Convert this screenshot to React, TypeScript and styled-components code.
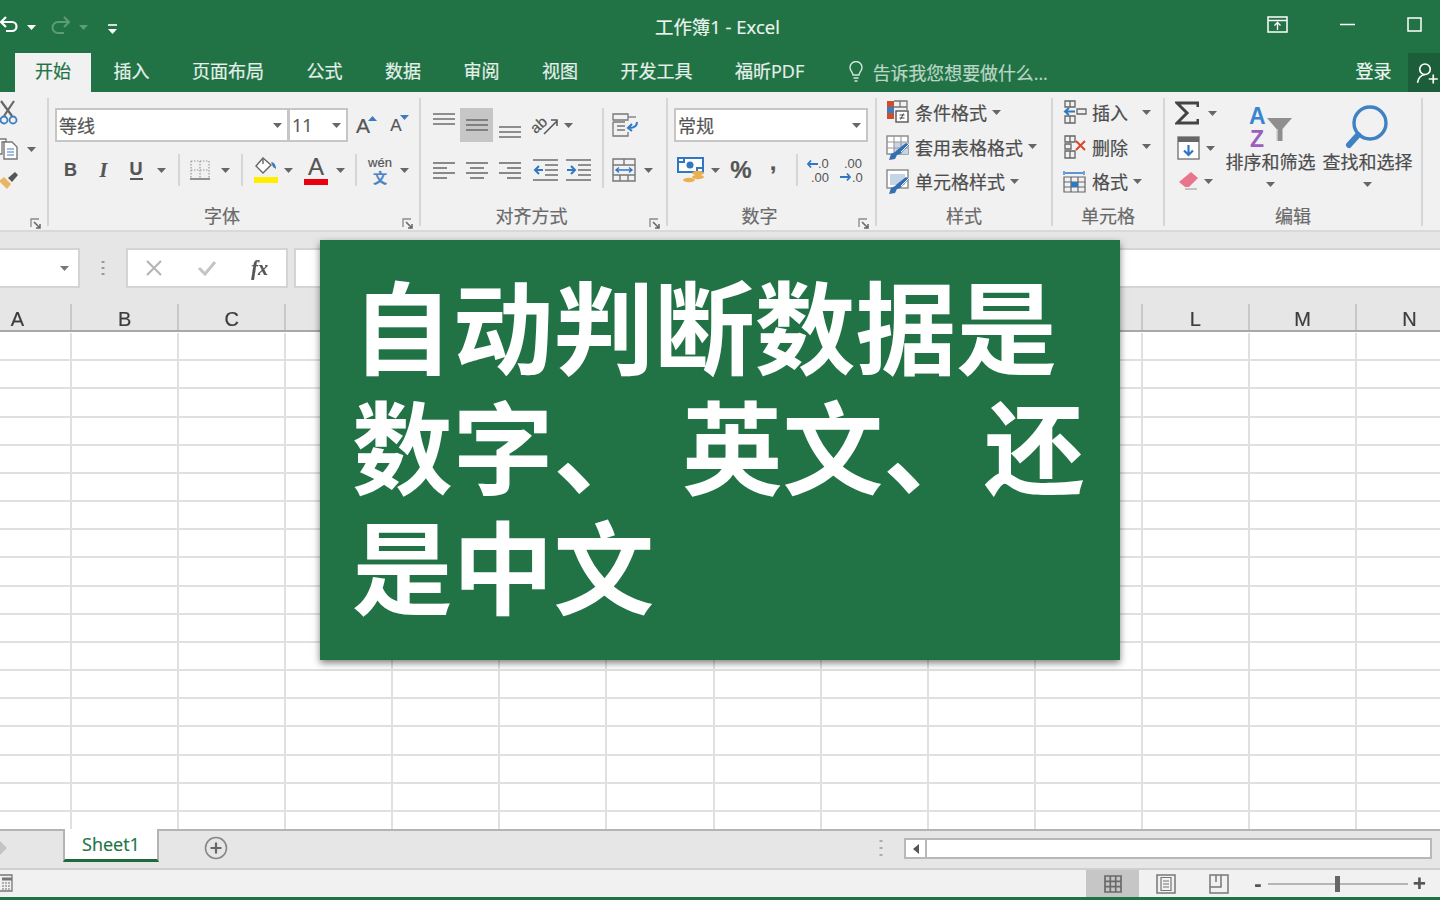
import React from "react";
import styled, { createGlobalStyle } from "styled-components";

const GREEN = "#217346";
const INK = "#555";
const FONT = `"Open Sans", "Noto Sans CJK SC", sans-serif`;

const Global = createGlobalStyle`
  html, body { margin: 0; padding: 0; width: 1440px; height: 900px; overflow: hidden; background: #fff; }
  * { box-sizing: border-box; }
`;

const Shell = styled.div`
  position: relative;
  width: 1440px;
  height: 900px;
  overflow: hidden;
  font-family: ${FONT};
  display: flex;
  flex-direction: column;
`;

const Base = styled.div`
  display: flex;
  flex-direction: column;
  height: 900px;
  filter: blur(0.35px);
  -webkit-text-stroke: 0.2px currentColor;
`;

/* title bar */
const TitleBar = styled.div`
  height: 53px;
  background: ${GREEN};
  display: flex;
  align-items: center;
  color: #eef5f0;
  padding-top: 1px;
`;
const Quick = styled.div`
  width: 642px;
  display: flex;
  align-items: center;
`;
const TitleText = styled.div`
  width: 153px;
  font-size: 18.4px;
  line-height: 24px;
  padding-left: 13px;
  white-space: nowrap;
`;
const WindowBtns = styled.div`
  margin-left: auto;
  display: flex;
  align-items: center;
  padding-right: 18px;
  gap: 52px;
`;

/* tabs */
const TabRow = styled.div`
  height: 39px;
  background: ${GREEN};
  display: flex;
  align-items: stretch;
  padding-left: 15px;
  gap: 2.5px;
`;
const Tab = styled.div<{ $active?: boolean }>`
  padding: 0 20px;
  font-size: 18px;
  line-height: 37px;
  white-space: nowrap;
  color: ${(p) => (p.$active ? GREEN : "#e6f0ea")};
  background: ${(p) => (p.$active ? "#f1f1f1" : "transparent")};
`;
const TellMe = styled.div`
  display: flex;
  align-items: center;
  gap: 9px;
  margin-left: 21px;
  height: 37px;
  font-size: 17.9px;
  color: #bcd6c6;
  white-space: nowrap;
`;
const Login = styled.div`
  margin-left: auto;
  font-size: 18px;
  line-height: 37px;
  color: #eef5f0;
  margin-right: 14px;
`;
const Account = styled.div`
  width: 32px;
  background: #1b5e39;
  display: flex;
  align-items: center;
  padding-left: 8px;
  overflow: hidden;
`;

/* ribbon */
const Ribbon = styled.div`
  height: 140px;
  background: #f1f1f1;
  border-bottom: 2px solid #d9d9d9;
  padding-top: 6px;
  display: flex;
  align-items: flex-start;
`;
const Group = styled.div<{ $w: number }>`
  position: relative;
  width: ${(p) => p.$w}px;
  height: 128px;
  border-right: 2px solid #d6d6d6;
  display: flex;
  flex-direction: column;
`;
const Body = styled.div<{ $pl: number; $pt?: number; $gap?: number }>`
  flex: 1;
  padding-left: ${(p) => p.$pl}px;
  padding-top: ${(p) => p.$pt ?? 10}px;
  display: flex;
  flex-direction: column;
  gap: ${(p) => p.$gap ?? 11}px;
  min-height: 0;
`;
const GroupLabel = styled.div<{ $pr?: number }>`
  height: 20px;
  line-height: 20px;
  font-size: 18px;
  color: #6a6a6a;
  text-align: center;
  padding-right: ${(p) => p.$pr ?? 0}px;
`;
const Launcher = styled.div`
  position: absolute;
  right: 5px;
  bottom: 1px;
  width: 12px;
  height: 12px;
`;
const Row = styled.div<{ $h?: number }>`
  height: ${(p) => p.$h ?? 34}px;
  display: flex;
  align-items: center;
`;
const Slot = styled.div<{ $w: number; $ml?: number; $on?: boolean }>`
  flex: 0 0 ${(p) => p.$w}px;
  width: ${(p) => p.$w}px;
  height: 34px;
  margin-left: ${(p) => p.$ml ?? 0}px;
  display: flex;
  align-items: center;
  justify-content: center;
  background: ${(p) => (p.$on ? "#c6c6c6" : "transparent")};
`;
const Combo = styled.div<{ $w: number; $overlap?: boolean }>`
  width: ${(p) => p.$w}px;
  height: 34px;
  margin-left: ${(p) => (p.$overlap ? -1 : 0)}px;
  border: 2px solid #c6c6c6;
  background: #fff;
  display: flex;
  align-items: center;
  justify-content: space-between;
  padding: 0 5px 0 2px;
  font-size: 18px;
  color: #555;
`;
const VSep = styled.div<{ $ml: number; $h?: number }>`
  flex: 0 0 2px;
  width: 2px;
  height: ${(p) => p.$h ?? 32}px;
  margin-left: ${(p) => p.$ml}px;
  background: #d6d6d6;
`;
const Glyph = styled.span<{ $bold?: boolean; $italic?: boolean; $under?: boolean; $size?: number; $serif?: boolean; $lift?: number }>`
  font-family: ${(p) => (p.$serif ? `"Liberation Serif", serif` : `"Liberation Sans", sans-serif`)};
  font-weight: ${(p) => (p.$bold ? 700 : 400)};
  font-style: ${(p) => (p.$italic ? "italic" : "normal")};
  font-size: ${(p) => p.$size ?? 18}px;
  line-height: 1;
  color: ${INK};
  margin-bottom: ${(p) => p.$lift ?? 0}px;
  border-bottom: ${(p) => (p.$under ? `2px solid ${INK}` : "none")};
`;
const Grow = styled.div<{ $top: number }>`
  display: flex;
  align-items: flex-start;
  gap: 0;
  svg { margin-top: ${(p) => p.$top}px; margin-left: -2px; }
`;
const Stack = styled.div<{ $lift?: number }>`
  display: flex;
  flex-direction: column;
  align-items: center;
  margin-bottom: ${(p) => p.$lift ?? 0}px;
`;
const ColorBar = styled.div<{ $c: string }>`
  width: 24px;
  height: 6px;
  background: ${(p) => p.$c};
`;
const Wen = styled.div`
  font-family: "Liberation Sans", sans-serif;
  font-size: 13px;
  line-height: 15px;
  color: #555;
`;
const WenZi = styled.div`
  font-size: 14px;
  line-height: 16px;
  font-weight: 700;
  color: #4a86c5;
`;
const Rotated = styled.span`
  display: inline-block;
  font-family: "Liberation Sans", sans-serif;
  font-size: 15px;
  line-height: 15px;
  color: #555;
  transform: rotate(-42deg) translate(-1px, -2px);
  margin-right: -15px;
`;
const Split = styled.div`
  display: flex;
`;
const Col = styled.div<{ $w?: number; $gap?: number }>`
  width: ${(p) => (p.$w ? `${p.$w}px` : "auto")};
  display: flex;
  flex-direction: column;
  gap: ${(p) => p.$gap ?? 11}px;
`;
const ListRow = styled.div`
  height: 24px;
  display: flex;
  align-items: center;
  font-size: 18px;
  color: #4d4d4d;
  white-space: nowrap;
`;
const ListIcon = styled.div<{ $mr: number }>`
  width: 24px;
  height: 24px;
  margin-right: ${(p) => p.$mr}px;
`;
const CaretGap = styled.span<{ $ml: number }>`
  margin-left: ${(p) => p.$ml}px;
  display: flex;
`;
const Big = styled.div<{ $ml?: number }>`
  width: 89px;
  margin-left: ${(p) => p.$ml ?? 0}px;
  display: flex;
  flex-direction: column;
  align-items: center;
`;
const BigIcon = styled.div`
  margin-top: 2px;
  height: 46px;
  display: flex;
`;
const BigLabel = styled.div`
  margin-top: 2px;
  font-size: 18px;
  line-height: 22px;
  color: #4d4d4d;
  white-space: nowrap;
`;
const BigCaret = styled.div`
  margin-top: 9px;
  display: flex;
`;
const EditRow = styled.div`
  display: flex;
  padding: 3px 0 0 10px;
`;
const SmallRow = styled.div<{ $h: number; $mb?: number }>`
  height: ${(p) => p.$h}px;
  margin-bottom: ${(p) => p.$mb ?? 0}px;
  display: flex;
  align-items: center;
`;
const SmallCol = styled.div`
  width: 51px;
  display: flex;
  flex-direction: column;
`;

/* formula bar */
const FormulaBar = styled.div`
  height: 72px;
  background: #e6e6e6;
  display: flex;
  align-items: flex-start;
  padding-top: 16px;
`;
const NameBox = styled.div`
  width: 80px;
  height: 40px;
  background: #fff;
  border: 2px solid #d4d4d4;
  border-left: 0;
  display: flex;
  align-items: center;
  justify-content: flex-end;
  padding-right: 7px;
`;
const Grip = styled.div`
  width: 46px;
  height: 40px;
  display: flex;
  align-items: center;
  justify-content: center;
`;
const FxButtons = styled.div`
  width: 162px;
  height: 40px;
  background: #fff;
  border: 2px solid #d4d4d4;
  display: flex;
  align-items: center;
  justify-content: space-around;
  padding: 0;
`;
const FxSlot = styled.div`
  width: 54px;
  display: flex;
  align-items: center;
  justify-content: center;
  color: #7a7a7a;
`;
const FormulaInput = styled.div`
  flex: 1;
  height: 40px;
  margin-left: 6px;
  background: #fff;
  border: 2px solid #d4d4d4;
  border-right: 0;
`;

/* sheet grid */
const Headers = styled.div`
  height: 28px;
  background: #e6e6e6;
  display: flex;
  margin-left: -35px;
  border-bottom: 2px solid #a8a8a8;
  width: 1476px;
`;
const Head = styled.div`
  width: 107.08px;
  flex: 0 0 107.08px;
  border-right: 2px solid #c8c8c8;
  text-align: center;
  font-family: "Liberation Sans", sans-serif;
  font-size: 20px;
  line-height: 30px;
  color: #3d3d3d;
`;
const Sheet = styled.div`
  height: 496px;
  margin-top: 1px;
  overflow: hidden;
  margin-left: -35px;
  width: 1476px;
`;
const SheetRow = styled.div`
  height: 28.18px;
  display: flex;
  border-bottom: 2px solid #e0e0e0;
`;
const SheetCell = styled.div`
  width: 107.08px;
  flex: 0 0 107.08px;
  border-right: 2px solid #e0e0e0;
`;

/* bottom bars */
const TabsBar = styled.div`
  height: 39px;
  background: #e6e6e6;
  border-top: 2px solid #b4b4b4;
  display: flex;
  align-items: flex-start;
`;
const SheetNav = styled.div`
  width: 63px;
  height: 33px;
  display: flex;
  align-items: center;
`;
const SheetTab = styled.div`
  width: 96px;
  height: 33px;
  margin-top: -2px;
  background: #fff;
  border-left: 2px solid #b4b4b4;
  border-right: 2px solid #b4b4b4;
  border-bottom: 3px solid #1d6a3f;
  text-align: center;
  font-size: 18px;
  line-height: 31px;
  color: ${GREEN};
`;
const AddSheet = styled.div`
  margin-left: 45px;
  margin-top: 5px;
  display: flex;
`;
const SplitDots = styled.div`
  margin-left: auto;
  margin-top: 8px;
  margin-right: 21px;
  display: flex;
`;
const HScroll = styled.div`
  width: 528px;
  height: 21px;
  margin-top: 7px;
  margin-right: 8px;
  background: #fff;
  border: 2px solid #b8b8b8;
  display: flex;
`;
const HScrollBtn = styled.div`
  width: 21px;
  border-right: 2px solid #b8b8b8;
  display: flex;
  align-items: center;
  justify-content: center;
`;
const StatusBar = styled.div`
  height: 29px;
  background: #f1f1f1;
  border-top: 2px solid #cfcfcf;
  display: flex;
  align-items: stretch;
`;
const StatusRight = styled.div`
  margin-left: auto;
  display: flex;
  align-items: center;
`;
const ViewBtn = styled.div<{ $on?: boolean }>`
  width: 53px;
  height: 100%;
  display: flex;
  align-items: center;
  justify-content: center;
  background: ${(p) => (p.$on ? "#c6c6c6" : "transparent")};
`;
const Zoomer = styled.div`
  display: flex;
  align-items: center;
  width: 195px;
  padding-left: 8px;
`;
const ZoomTrack = styled.div`
  position: relative;
  width: 140px;
  height: 2px;
  margin: 0 5px;
  background: #b5b5b5;
`;
const ZoomThumb = styled.div`
  position: absolute;
  left: 67px;
  top: -7px;
  width: 5px;
  height: 16px;
  background: #666;
`;
const ZoomSign = styled.div`
  font-family: "Liberation Sans", sans-serif;
  font-size: 22px;
  font-weight: 700;
  line-height: 22px;
  color: #555;
  width: 10px;
  text-align: center;
`;
const BottomLine = styled.div`
  height: 3px;
  background: ${GREEN};
`;

/* headline card */
const Card = styled.div`
  position: absolute;
  left: 320px;
  top: 240px;
  width: 800px;
  height: 420px;
  padding: 23px 0 0 32px;
  background: ${GREEN};
  box-shadow: 0 3px 7px rgba(0, 0, 0, 0.5);
  color: #fff;
  font-family: "Noto Sans CJK SC", sans-serif;
  font-size: 100.7px;
  font-weight: 700;
  line-height: 120px;
  white-space: pre;
  word-spacing: 5px;
`;
const CardLine = styled.div``;

/* drawn icons */
const Caret = ({ c = "#666", w = 9 }: { c?: string; w?: number }) => (
  <svg width={w} height="5" viewBox="0 0 9 5" style={{ overflow: "visible" }}>
    <path d="M0 0h9L4.500 5z" fill={c} />
  </svg>
);

const Lines = ({ rows, w = 22, h = 12, c = "#6e6e6e" }: { rows: number[][]; w?: number; h?: number; c?: string }) => (
  <svg width={w} height={h} viewBox={`0 0 ${w} ${h}`}>
    {rows.map(([y, a, b], i) => (
      <path key={i} d={`M${a} ${y}H${b}`} stroke={c} strokeWidth="1.6" />
    ))}
  </svg>
);

const Launch = () => (
  <svg width="12" height="12" viewBox="0 0 12 12">
    <path d="M1 9V1h8" fill="none" stroke="#8a8a8a" strokeWidth="1.3" />
    <path d="M4 4l6 6M10 6v4H6" fill="none" stroke="#666" strokeWidth="1.5" />
  </svg>
);

const CondIcon = () => (
  <svg width="24" height="24" viewBox="0 0 24 24">
    <rect x="1" y="1" width="7" height="6" fill="#c9502b" />
    <rect x="1" y="7" width="7" height="6" fill="#3f79c0" />
    <rect x="1" y="13" width="7" height="6" fill="#c9502b" />
    <path d="M8 1h13v9M8 7h13M14 1v6" fill="none" stroke="#777" strokeWidth="1.3" />
    <rect x="10" y="11" width="12" height="11" fill="#fff" stroke="#555" strokeWidth="1.4" />
    <path d="M13.5 15h5M13.5 18h5M17.5 13.5l-3 6" stroke="#444" strokeWidth="1" />
  </svg>
);
const TableIcon = ({ plain }: { plain?: boolean }) => (
  <svg width="24" height="26" viewBox="0 0 24 26">
    <rect x="1" y="1" width="21" height="18" fill="#fff" stroke="#888" strokeWidth="1.4" />
    {plain ? <rect x="4" y="5" width="15" height="11" fill="#c5d4e6" /> : <rect x="8" y="7" width="14" height="12" fill="#c5d4e6" />}
    {!plain && <path d="M1 7h21M1 13h21M8 1v18M15 1v18" stroke="#999" strokeWidth="1.1" />}
    <path d="M23 10L14 19l-3 1-2 4-6 1 2-6 4-2 2-2 9-7z" fill="#3370b0" />
    <path d="M23 9l-8 8" stroke="#f1f1f1" strokeWidth="1" />
  </svg>
);
const InsertIcon = () => (
  <svg width="24" height="24" viewBox="0 0 24 24">
    <path d="M2 1h10v6H2zM2 16h10v7H2zM7 16v7M7 1v6M14 9h9v5h-9z" fill="none" stroke="#666" strokeWidth="1.3" />
    <path d="M12 11.5H2M6 8l-4 3.5L6 15" fill="none" stroke="#2f78c4" strokeWidth="2" />
  </svg>
);
const DeleteIcon = () => (
  <svg width="24" height="24" viewBox="0 0 24 24">
    <path d="M2 1h10v6H2zM7 1v6M2 16h10v7H2zM7 16v7M2 9h6v5H2z" fill="none" stroke="#666" strokeWidth="1.3" />
    <path d="M13 6l9 9M22 6l-9 9" stroke="#d8472b" strokeWidth="2" />
  </svg>
);
const FormatIcon = () => (
  <svg width="24" height="24" viewBox="0 0 24 24">
    <path d="M1 2v4M21 2v4M2 4h18" stroke="#2f78c4" strokeWidth="1.3" />
    <path d="M1 8h21v15H1zM1 13h21M1 18h21M8 8v15M15 8v15" fill="none" stroke="#666" strokeWidth="1.2" />
    <rect x="8" y="13" width="7" height="5" fill="#2f78c4" />
  </svg>
);

const SortIcon = () => (
  <svg width="46" height="52" viewBox="0 0 46 52">
    <text x="1" y="21" fontFamily="Liberation Sans" fontWeight="700" fontSize="23" fill="#3a85d0">A</text>
    <text x="2" y="44" fontFamily="Liberation Sans" fontWeight="700" fontSize="23" fill="#9b5fc0">Z</text>
    <path d="M19 15h25l-9.500 11v12h-6V26z" fill="#8f8f8f" />
    <path d="M29 26v12" stroke="#f1f1f1" strokeWidth="1" />
  </svg>
);
const Magnifier = () => (
  <svg width="46" height="46" viewBox="0 0 46 46">
    <circle cx="25" cy="20" r="16" fill="none" stroke="#3e82c4" strokeWidth="3.4" />
    <path d="M13 32L4 42" stroke="#3e82c4" strokeWidth="6" strokeLinecap="round" />
  </svg>
);

const columns = "ABCDEFGHIJKLMN".split("");
const hiddenByCard = "DEFGHIJK";
const sheetRows = Array.from({ length: 18 }, (_, i) => i);

export default function App() {
  return (
    <Shell>
      <Global />
      <Base>
        <TitleBar>
          <Quick>
            <svg width="20" height="17" viewBox="0 0 20 17" style={{ marginBottom: 5 }}>
              <path d="M6 1L1 6l5 5M1 6h11a4.500 4.500 0 0 1 0 9H6" fill="none" stroke="#fff" strokeWidth="2.200" />
            </svg>
            <CaretGap $ml={7}><Caret c="#fff" /></CaretGap>
            <svg width="21" height="19" viewBox="0 0 21 19" style={{ marginLeft: 13, marginBottom: 3 }}>
              <path d="M15 1l5 5-5 5M20 6H9a5 5 0 0 0 0 11h6" fill="none" stroke="#5c9c79" strokeWidth="2" />
            </svg>
            <CaretGap $ml={9}><Caret c="#5c9c79" /></CaretGap>
            <svg width="11" height="11" viewBox="0 0 11 11" style={{ marginLeft: 19, marginTop: 4 }}>
              <path d="M1 1h9" stroke="#fff" strokeWidth="1.6" />
              <path d="M1 5h9l-4.500 5z" fill="#fff" />
            </svg>
          </Quick>
          <TitleText>工作簿1 - Excel</TitleText>
          <WindowBtns>
            <svg width="21" height="17" viewBox="0 0 21 17" style={{ marginBottom: 5 }}>
              <rect x="1" y="1" width="19" height="15" fill="none" stroke="#fff" strokeWidth="1.5" />
              <path d="M1 4.500h19M10.500 14V7M7.500 9.500l3-3 3 3" fill="none" stroke="#fff" strokeWidth="1.3" />
            </svg>
            <svg width="15" height="3" viewBox="0 0 15 3" style={{ marginBottom: 5 }}>
              <path d="M0 1.500h15" stroke="#fff" strokeWidth="1.500" />
            </svg>
            <svg width="15" height="15" viewBox="0 0 15 15" style={{ marginBottom: 5 }}>
              <rect x="1" y="1" width="13" height="13" fill="none" stroke="#fff" strokeWidth="1.500" />
            </svg>
          </WindowBtns>
        </TitleBar>

        <TabRow>
          <Tab $active>开始</Tab>
          <Tab>插入</Tab>
          <Tab>页面布局</Tab>
          <Tab>公式</Tab>
          <Tab>数据</Tab>
          <Tab>审阅</Tab>
          <Tab>视图</Tab>
          <Tab>开发工具</Tab>
          <Tab>福昕PDF</Tab>
          <TellMe>
            <svg width="16" height="22" viewBox="0 0 16 22">
              <path d="M5 14c0-3-3-4-3-7.500a6 6 0 0 1 12 0C14 10 11 11 11 14z" fill="none" stroke="#d5e6db" strokeWidth="1.4" />
              <path d="M5.500 17h5M6.500 20h3" stroke="#d5e6db" strokeWidth="1.4" />
            </svg>
            告诉我您想要做什么...
          </TellMe>
          <Login>登录</Login>
          <Account>
            <svg width="32" height="30" viewBox="0 0 32 30">
              <circle cx="12" cy="10" r="7" fill="none" stroke="#fff" strokeWidth="2.200" />
              <path d="M2 28c1-6 4-10 10-11M17 23h12M23 17v12" fill="none" stroke="#fff" strokeWidth="2.200" />
            </svg>
          </Account>
        </TabRow>

        <Ribbon>
          <Group $w={49}>
            <Body $pl={0} $pt={2} $gap={12}>
              <svg width="18" height="26" viewBox="0 0 18 26">
                <path d="M14 1L4 16M1 1l11 15" stroke="#666" strokeWidth="2.200" />
                <circle cx="4" cy="20" r="3.500" fill="none" stroke="#3e7cc0" strokeWidth="1.800" />
                <circle cx="13" cy="20" r="3.500" fill="none" stroke="#3e7cc0" strokeWidth="1.800" />
              </svg>
              <Row $h={22}>
                <svg width="18" height="22" viewBox="0 0 18 22">
                  <path d="M-2 1h8v3H2v12h-4z" fill="#fff" stroke="#777" strokeWidth="1.300" />
                  <path d="M4 4h8l5 5v12H4z" fill="#fff" stroke="#777" strokeWidth="1.400" />
                  <path d="M7 11h7M7 14h7M7 17h7" stroke="#3e7cc0" strokeWidth="1.200" />
                </svg>
                <CaretGap $ml={9}><Caret /></CaretGap>
              </Row>
              <svg width="19" height="20" viewBox="0 0 19 20" style={{ marginTop: -2 }}>
                <path d="M-1 11L7 19l4-5-7-7z" fill="#e9b562" />
                <path d="M8 8l4 4 6-7-3-3z" fill="#555" />
              </svg>
            </Body>
            <Launcher><Launch /></Launcher>
          </Group>

          <Group $w={372}>
            <Body $pl={6}>
              <Row>
                <Combo $w={234}>等线<Caret /></Combo>
                <Combo $w={60} $overlap>11<Caret /></Combo>
                <Slot $w={33} $ml={2}>
                  <Grow $top={1}>
                    <Glyph $size={21}>A</Glyph>
                    <svg width="9" height="6" viewBox="0 0 9 6"><path d="M0 5l4.500-5L9 5z" fill="#3f79c0" /></svg>
                  </Grow>
                </Slot>
                <Slot $w={33}>
                  <Grow $top={-2}>
                    <Glyph $size={17}>A</Glyph>
                    <svg width="9" height="6" viewBox="0 0 9 6"><path d="M0 0h9L4.500 5z" fill="#3f79c0" /></svg>
                  </Grow>
                </Slot>
              </Row>
              <Row>
                <Slot $w={33} $ml={-1}><Glyph $bold>B</Glyph></Slot>
                <Slot $w={33}><Glyph $italic $bold $serif $size={20}>I</Glyph></Slot>
                <Slot $w={32}><Glyph $bold $under>U</Glyph></Slot>
                <Slot $w={18}><Caret /></Slot>
                <VSep $ml={8} />
                <Slot $w={38} $ml={1}>
                  <svg width="20" height="20" viewBox="0 0 20 20">
                    <path d="M1 1h18v18M1 1v18M10 1v18M1 10h18" fill="none" stroke="#999" strokeWidth="1.200" strokeDasharray="1.500 1.500" />
                    <path d="M0 19h20" stroke="#777" strokeWidth="1.600" />
                  </svg>
                </Slot>
                <Slot $w={12}><Caret /></Slot>
                <VSep $ml={10} />
                <Slot $w={41} $ml={2}>
                  <Stack $lift={2}>
                    <svg width="24" height="21" viewBox="0 0 24 21">
                      <path d="M9 2L2 10l7 7 8-8z" fill="#fff" stroke="#666" strokeWidth="1.400" />
                      <path d="M9 2v6" stroke="#666" strokeWidth="1.400" />
                      <path d="M17 6c3 0 5 3 5 7l-3-2z" fill="#3f79c0" />
                    </svg>
                    <ColorBar $c="#ffee00" />
                  </Stack>
                </Slot>
                <Slot $w={8} $ml={-2}><Caret /></Slot>
                <Slot $w={40} $ml={4}>
                  <Stack>
                    <Glyph $size={24}>A</Glyph>
                    <ColorBar $c="#e8000f" />
                  </Stack>
                </Slot>
                <Slot $w={8}><Caret /></Slot>
                <VSep $ml={11} />
                <Slot $w={40} $ml={3}>
                  <Stack>
                    <Wen>wén</Wen>
                    <WenZi>文</WenZi>
                  </Stack>
                </Slot>
                <Slot $w={8}><Caret /></Slot>
              </Row>
            </Body>
            <GroupLabel $pr={24}>字体</GroupLabel>
            <Launcher><Launch /></Launcher>
          </Group>

          <Group $w={247}>
            <Body $pl={6}>
              <Split>
                <Col $w={175}>
                  <Row>
                    <Slot $w={33}>
                      <svg width="22" height="30" viewBox="0 0 22 30">
                        <path d="M0 4h22M0 9h22M0 14h22" stroke="#6e6e6e" strokeWidth="1.600" />
                      </svg>
                    </Slot>
                    <Slot $w={33} $on><Lines rows={[[1, 0, 22], [6, 0, 22], [11, 0, 22]]} /></Slot>
                    <Slot $w={33}>
                      <svg width="22" height="30" viewBox="0 0 22 30">
                        <path d="M0 17h22M0 22h22M0 27h22" stroke="#6e6e6e" strokeWidth="1.600" />
                      </svg>
                    </Slot>
                    <Slot $w={40}>
                      <Rotated>ab</Rotated>
                      <svg width="26" height="26" viewBox="0 0 26 26">
                        <path d="M10 22L23 9M17 8h6v6" fill="none" stroke="#555" strokeWidth="1.500" />
                      </svg>
                    </Slot>
                    <Slot $w={8} $ml={-2}><Caret /></Slot>
                  </Row>
                  <Row>
                    <Slot $w={33}><Lines h={18} rows={[[2, 0, 22], [7, 0, 14], [12, 0, 22], [17, 0, 14]]} /></Slot>
                    <Slot $w={33}><Lines h={18} rows={[[2, 0, 22], [7, 4, 18], [12, 0, 22], [17, 4, 18]]} /></Slot>
                    <Slot $w={33}><Lines h={18} rows={[[2, 0, 22], [7, 8, 22], [12, 0, 22], [17, 8, 22]]} /></Slot>
                    <Slot $w={33} $ml={3}>
                      <svg width="25" height="22" viewBox="0 0 25 22">
                        <path d="M0 1h25M12 6h13M12 11h13M12 16h13M0 21h25" stroke="#6e6e6e" strokeWidth="1.600" />
                        <path d="M10 11H2M6 7l-4 4 4 4" fill="none" stroke="#2f78c4" strokeWidth="2" />
                      </svg>
                    </Slot>
                    <Slot $w={33}>
                      <svg width="25" height="22" viewBox="0 0 25 22">
                        <path d="M0 1h25M12 6h13M12 11h13M12 16h13M0 21h25" stroke="#6e6e6e" strokeWidth="1.600" />
                        <path d="M1 11h8M5 7l4 4-4 4" fill="none" stroke="#2f78c4" strokeWidth="2" />
                      </svg>
                    </Slot>
                  </Row>
                </Col>
                <VSep $ml={0} $h={80} />
                <Col>
                  <Row>
                    <Slot $w={42}>
                      <svg width="26" height="24" viewBox="0 0 26 24">
                        <path d="M1 1h15v6H1zM1 9h12M1 9v14h15v-4M5 13h8M5 17h8" fill="none" stroke="#777" strokeWidth="1.300" />
                        <path d="M16 4h8" stroke="#777" strokeWidth="1.300" />
                        <path d="M25 9c0 4-2 6-8 6M20 11l-4 4 4 3" fill="none" stroke="#2f78c4" strokeWidth="2" />
                      </svg>
                    </Slot>
                  </Row>
                  <Row>
                    <Slot $w={40}>
                      <svg width="24" height="24" viewBox="0 0 24 24">
                        <path d="M1 1h22v22H1zM1 7h22M1 17h22M12 1v6M8 17v6M16 17v6" fill="none" stroke="#777" strokeWidth="1.400" />
                        <path d="M4 12h16M7 9.500L4 12l3 2.500M17 9.500l3 2.500-3 2.500" fill="none" stroke="#2f78c4" strokeWidth="1.400" />
                      </svg>
                    </Slot>
                    <Slot $w={8}><Caret /></Slot>
                  </Row>
                </Col>
              </Split>
            </Body>
            <GroupLabel $pr={24}>对齐方式</GroupLabel>
            <Launcher><Launch /></Launcher>
          </Group>

          <Group $w={209}>
            <Body $pl={6}>
              <Row><Combo $w={194}>常规<Caret /></Combo></Row>
              <Row>
                <Slot $w={34}>
                  <svg width="28" height="26" viewBox="0 0 28 26">
                    <rect x="1" y="1" width="25" height="14" fill="#fff" stroke="#2f78c4" strokeWidth="2" />
                    <path d="M1 5h6V1M26 11h-6v4" fill="none" stroke="#2f78c4" strokeWidth="2" />
                    <circle cx="13" cy="8" r="3.500" fill="#2f78c4" />
                    <ellipse cx="21" cy="16" rx="6" ry="2.200" fill="#e8b04e" />
                    <ellipse cx="21" cy="20" rx="6" ry="2.200" fill="#e8b04e" />
                    <ellipse cx="12" cy="23" rx="6" ry="2.200" fill="#e8b04e" />
                  </svg>
                </Slot>
                <Slot $w={8} $ml={3}><Caret /></Slot>
                <Slot $w={44}><Glyph $bold $size={24}>%</Glyph></Slot>
                <Slot $w={20}><Glyph $bold $size={24} $lift={16}>,</Glyph></Slot>
                <VSep $ml={13} />
                <Slot $w={34} $ml={4}>
                  <svg width="26" height="30" viewBox="0 0 26 30">
                    <text x="12" y="13" fontFamily="Liberation Sans" fontSize="13" fill="#555">.0</text>
                    <text x="5" y="27" fontFamily="Liberation Sans" fontSize="13" fill="#555">.00</text>
                    <path d="M12 9H2M5 5.500L2 9l3 3.500" fill="none" stroke="#2f78c4" strokeWidth="1.800" />
                  </svg>
                </Slot>
                <Slot $w={32}>
                  <svg width="26" height="30" viewBox="0 0 26 30">
                    <text x="5" y="13" fontFamily="Liberation Sans" fontSize="13" fill="#555">.00</text>
                    <text x="13" y="27" fontFamily="Liberation Sans" fontSize="13" fill="#555">.0</text>
                    <path d="M1 22h10M8 18.500l3 3.500-3 3.500" fill="none" stroke="#2f78c4" strokeWidth="1.800" />
                  </svg>
                </Slot>
              </Row>
            </Body>
            <GroupLabel $pr={24}>数字</GroupLabel>
            <Launcher><Launch /></Launcher>
          </Group>

          <Group $w={176}>
            <Body $pl={9} $pt={2} $gap={10.5}>
              <ListRow><ListIcon $mr={5}><CondIcon /></ListIcon>条件格式<CaretGap $ml={5}><Caret /></CaretGap></ListRow>
              <ListRow><ListIcon $mr={5}><TableIcon /></ListIcon>套用表格格式<CaretGap $ml={5}><Caret /></CaretGap></ListRow>
              <ListRow><ListIcon $mr={5}><TableIcon plain /></ListIcon>单元格样式<CaretGap $ml={5}><Caret /></CaretGap></ListRow>
            </Body>
            <GroupLabel>样式</GroupLabel>
          </Group>

          <Group $w={112}>
            <Body $pl={10} $pt={2} $gap={10.5}>
              <ListRow><ListIcon $mr={5}><InsertIcon /></ListIcon>插入<CaretGap $ml={14}><Caret /></CaretGap></ListRow>
              <ListRow><ListIcon $mr={5}><DeleteIcon /></ListIcon>删除<CaretGap $ml={14}><Caret /></CaretGap></ListRow>
              <ListRow><ListIcon $mr={5}><FormatIcon /></ListIcon>格式<CaretGap $ml={5}><Caret /></CaretGap></ListRow>
            </Body>
            <GroupLabel>单元格</GroupLabel>
          </Group>

          <Group $w={258}>
            <EditRow>
              <SmallCol>
                <SmallRow $h={24} $mb={11}>
                  <svg width="24" height="24" viewBox="0 0 24 24">
                    <path d="M23 6V2H2l10 10L2 22h21v-4" fill="none" stroke="#444" strokeWidth="3" />
                  </svg>
                  <CaretGap $ml={9}><Caret /></CaretGap>
                </SmallRow>
                <SmallRow $h={24} $mb={10}>
                  <svg width="24" height="24" viewBox="0 0 24 24" style={{ marginLeft: 2 }}>
                    <rect x="1" y="1" width="21" height="22" fill="#fff" stroke="#777" strokeWidth="1.400" />
                    <rect x="1" y="1" width="21" height="5" fill="#666" />
                    <path d="M11.500 9v10M7 14.500l4.500 4.500 4.500-4.500" fill="none" stroke="#2f78c4" strokeWidth="2.200" />
                  </svg>
                  <CaretGap $ml={5}><Caret /></CaretGap>
                </SmallRow>
                <SmallRow $h={22}>
                  <svg width="22" height="22" viewBox="0 0 22 22" style={{ marginLeft: 2 }}>
                    <path d="M14 2l7 6-9 9-4 0-6-5z" fill="#e9758c" />
                    <path d="M8 19h12" stroke="#aaa" strokeWidth="1.300" />
                  </svg>
                  <CaretGap $ml={5}><Caret /></CaretGap>
                </SmallRow>
              </SmallCol>
              <Big>
                <BigIcon><SortIcon /></BigIcon>
                <BigLabel>排序和筛选</BigLabel>
                <BigCaret><Caret /></BigCaret>
              </Big>
              <Big $ml={8}>
                <BigIcon><Magnifier /></BigIcon>
                <BigLabel>查找和选择</BigLabel>
                <BigCaret><Caret /></BigCaret>
              </Big>
            </EditRow>
            <Body $pl={0} $pt={0} />
            <GroupLabel>编辑</GroupLabel>
          </Group>
        </Ribbon>

        <FormulaBar>
          <NameBox><Caret c="#777" w={13} /></NameBox>
          <Grip>
            <svg width="4" height="16" viewBox="0 0 4 16">
              <path d="M2 1v2M2 7v2M2 13v2" stroke="#999" strokeWidth="3" />
            </svg>
          </Grip>
          <FxButtons>
            <FxSlot>
              <svg width="18" height="18" viewBox="0 0 18 18">
                <path d="M2 2l14 14M16 2L2 16" stroke="#b4b4b4" strokeWidth="2" />
              </svg>
            </FxSlot>
            <FxSlot>
              <svg width="20" height="18" viewBox="0 0 20 18">
                <path d="M2 9l6 6L18 3" fill="none" stroke="#c4c4c4" strokeWidth="3" />
              </svg>
            </FxSlot>
            <FxSlot><Glyph $serif $italic $bold $size={20}>fx</Glyph></FxSlot>
          </FxButtons>
          <FormulaInput />
        </FormulaBar>

        <Headers>
          {columns.map((c) => <Head key={c}>{hiddenByCard.includes(c) ? "" : c}</Head>)}
        </Headers>
        <Sheet>
          {sheetRows.map((r) => (
            <SheetRow key={r}>
              {columns.map((c) => <SheetCell key={c} />)}
            </SheetRow>
          ))}
        </Sheet>

        <TabsBar>
          <SheetNav>
            <svg width="8" height="14" viewBox="0 0 8 14">
              <path d="M0 0l7 7-7 7z" fill="#c4c4c4" />
            </svg>
          </SheetNav>
          <SheetTab>Sheet1</SheetTab>
          <AddSheet>
            <svg width="24" height="24" viewBox="0 0 24 24">
              <circle cx="12" cy="12" r="10.500" fill="none" stroke="#888" strokeWidth="1.600" />
              <path d="M12 6.500v11M6.500 12h11" stroke="#666" strokeWidth="2.200" />
            </svg>
          </AddSheet>
          <SplitDots>
            <svg width="4" height="18" viewBox="0 0 4 18">
              <path d="M2 1v2M2 8v2M2 15v2" stroke="#aaa" strokeWidth="3" />
            </svg>
          </SplitDots>
          <HScroll>
            <HScrollBtn>
              <svg width="6" height="10" viewBox="0 0 6 10">
                <path d="M6 0v10L0 5z" fill="#555" />
              </svg>
            </HScrollBtn>
          </HScroll>
        </TabsBar>

        <StatusBar>
          <svg width="13" height="18" viewBox="0 0 13 18" style={{ marginTop: 4 }}>
            <path d="M0 1h12v16H0" fill="#f1f1f1" stroke="#777" strokeWidth="1.300" />
            <path d="M2 5h10" stroke="#777" strokeWidth="3" />
            <path d="M2 9h9M2 12h9M2 15h9" stroke="#999" strokeWidth="1.300" strokeDasharray="2 1" />
          </svg>
          <StatusRight>
            <ViewBtn $on>
              <svg width="18" height="18" viewBox="0 0 18 18">
                <path d="M1 1h16v16H1zM1 6.300h16M1 11.700h16M6.300 1v16M11.700 1v16" fill="none" stroke="#6a6a6a" strokeWidth="1.700" />
              </svg>
            </ViewBtn>
            <ViewBtn>
              <svg width="20" height="20" viewBox="0 0 20 20">
                <rect x="1" y="1" width="18" height="18" fill="none" stroke="#777" strokeWidth="1.500" />
                <path d="M5 3.500h10v13H5zM7 7h6M7 10h6M7 13h6" fill="none" stroke="#777" strokeWidth="1.200" />
              </svg>
            </ViewBtn>
            <ViewBtn>
              <svg width="20" height="20" viewBox="0 0 20 20">
                <path d="M1 1h18v18H1zM1 13h11V1M7 1v7" fill="none" stroke="#777" strokeWidth="1.500" />
              </svg>
            </ViewBtn>
            <Zoomer>
              <ZoomSign>-</ZoomSign>
              <ZoomTrack><ZoomThumb /></ZoomTrack>
              <ZoomSign>+</ZoomSign>
            </Zoomer>
          </StatusRight>
        </StatusBar>
        <BottomLine />
      </Base>

      <Card>
        <CardLine>自动判断数据是</CardLine>
        <CardLine>数字、 英文、还</CardLine>
        <CardLine>是中文</CardLine>
      </Card>
    </Shell>
  );
}
